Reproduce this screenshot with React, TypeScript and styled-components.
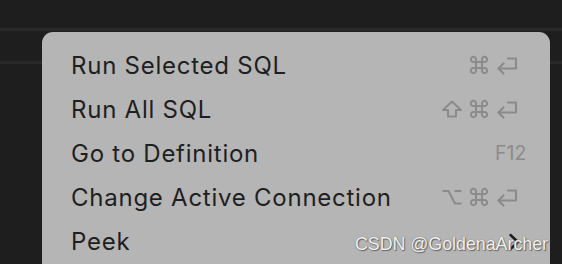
import * as React from "react";
import styled, { createGlobalStyle } from "styled-components";

const GlobalStyle = createGlobalStyle`
  html, body {
    margin: 0;
    padding: 0;
    background: #1e1e1f;
  }
  * {
    box-sizing: border-box;
  }
`;

type Key = "cmd" | "shift" | "opt" | "ret";

interface MenuEntry {
  label: string;
  mods?: Key[];
  key?: Key | string;
  submenu?: boolean;
}

const entries: MenuEntry[] = [
  { label: "Run Selected SQL", mods: ["cmd"], key: "ret" },
  { label: "Run All SQL", mods: ["shift", "cmd"], key: "ret" },
  { label: "Go to Definition", key: "F12" },
  { label: "Change Active Connection", mods: ["opt", "cmd"], key: "ret" },
  { label: "Peek", submenu: true },
];

const KeyGlyph: React.FC<{ kind: Key }> = ({ kind }) => {
  if (kind === "cmd") {
    return (
      <svg width="20" height="20" viewBox="0 0 20 20" fill="none" stroke="currentColor" strokeWidth="2">
        <path d="M7 7 H13 V13 H7 Z" />
        <path d="M7 7 V4.8 A2.6 2.6 0 1 0 4.8 7 Z" />
        <path d="M13 7 V4.8 A2.6 2.6 0 1 1 15.2 7 Z" />
        <path d="M7 13 V15.2 A2.6 2.6 0 1 1 4.8 13 Z" />
        <path d="M13 13 V15.2 A2.6 2.6 0 1 0 15.2 13 Z" />
      </svg>
    );
  }
  if (kind === "shift") {
    return (
      <svg width="22" height="20" viewBox="0 0 22 20" fill="none" stroke="currentColor" strokeWidth="2" strokeLinejoin="round">
        <path d="M11 2.5 L20 11 H15 V17.5 H7 V11 H2 Z" />
      </svg>
    );
  }
  if (kind === "opt") {
    return (
      <svg width="22" height="20" viewBox="0 0 22 20" fill="none" stroke="currentColor" strokeWidth="2.2">
        <path d="M1.5 4 H7.5 L14 16.5 H20.5" />
        <path d="M13.5 4 H20.5" />
      </svg>
    );
  }
  return (
    <svg width="23" height="20" viewBox="0 0 23 20" fill="none" stroke="currentColor" strokeWidth="2.2" strokeLinejoin="round" strokeLinecap="round">
      <path d="M13 3.5 H21 V13.5 H3.5" />
      <path d="M8.5 8.5 L3.5 13.5 L8.5 18.5" />
    </svg>
  );
};

const Chevron: React.FC = () => (
  <svg width="12" height="18" viewBox="0 0 12 18" fill="none" stroke="#1c1c1c" strokeWidth="2.4" strokeLinecap="round" strokeLinejoin="round">
    <path d="M2.5 2 L10 9 L2.5 16" />
  </svg>
);

const App: React.FC = () => {
  return (
    <Page>
      <GlobalStyle />
      <Editor>
        <EditorLine />
        <EditorLine />
      </Editor>
      <ContextMenu>
        {entries.map((entry) => (
          <MenuRow key={entry.label}>
            <MenuLabel>{entry.label}</MenuLabel>
            <Shortcut>
              <Modifiers>
                {(entry.mods || []).map((m) => (
                  <KeyGlyph key={m} kind={m} />
                ))}
              </Modifiers>
              <KeySlot>
                {entry.submenu ? (
                  <ChevronSlot>
                    <Chevron />
                  </ChevronSlot>
                ) : entry.key === "ret" ? (
                  <KeyGlyph kind="ret" />
                ) : (
                  <KeyText>{entry.key}</KeyText>
                )}
              </KeySlot>
            </Shortcut>
          </MenuRow>
        ))}
      </ContextMenu>
      <Watermark>CSDN @GoldenaArcher</Watermark>
    </Page>
  );
};

export default App;

const Page = styled.div`
  position: relative;
  width: 562px;
  height: 264px;
  overflow: hidden;
  background: #1e1e1f;
`;

const Editor = styled.div`
  display: flex;
  flex-direction: column;
  gap: 30px;
  padding-top: 28px;
`;

const EditorLine = styled.div`
  height: 3px;
  width: 100%;
  background: #29292a;
`;

const ContextMenu = styled.div`
  position: absolute;
  left: 42px;
  top: 32px;
  width: 508px;
  height: 260px;
  padding-top: 11px;
  background: #b5b5b5;
  border-radius: 11px;
  display: flex;
  flex-direction: column;
`;

const MenuRow = styled.div`
  display: flex;
  align-items: center;
  justify-content: space-between;
  height: 44px;
  padding: 0 23px 0 29px;
`;

const MenuLabel = styled.span`
  font-family: Inter, "Noto Sans", sans-serif;
  font-size: 24px;
  color: #1f1f1f;
  letter-spacing: 0.75px;
`;

const Shortcut = styled.div`
  display: flex;
  align-items: center;
  color: #8b8b8b;
`;

const Modifiers = styled.div`
  display: flex;
  align-items: center;
  justify-content: flex-end;
  gap: 6px;
  margin-right: 6px;
`;

const KeySlot = styled.div`
  display: flex;
  align-items: center;
  width: 32px;
`;

const KeyText = styled.span`
  font-family: Inter, "Noto Sans", sans-serif;
  font-size: 19.5px;
  color: #8b8b8b;
`;

const ChevronSlot = styled.div`
  display: flex;
  padding-left: 13px;
  padding-top: 2px;
`;

const Watermark = styled.div`
  position: absolute;
  left: 355px;
  top: 234px;
  font-family: "Liberation Sans", Arial, sans-serif;
  font-size: 17.8px;
  color: #f2f2f2;
  text-shadow: 0 0 1px #555, 1px 1px 1px #666;
  white-space: nowrap;
`;
